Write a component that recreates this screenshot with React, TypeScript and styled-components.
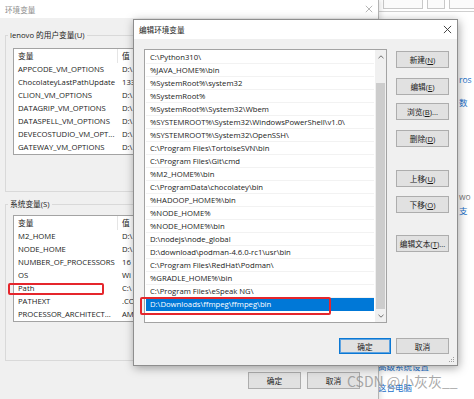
import React from "react";
import styled, { createGlobalStyle } from "styled-components";

const Global = createGlobalStyle`
  html, body { margin: 0; padding: 0; background: #ffffff; }
  #root { width: 474px; height: 399px; }
`;

const UI_FONT = `"Open Sans", "Noto Sans CJK SC", sans-serif`;

const Desktop = styled.div`
  position: relative;
  width: 474px;
  height: 399px;
  overflow: hidden;
  background: #ffffff;
  font-family: ${UI_FONT};
  font-size: 7.7px;
  color: #1a1a1a;
`;

/* ---------- window far behind (top-right strip + link texts) ---------- */
const BackWindow = styled.div`
  position: absolute;
  left: 379px;
  top: -20px;
  width: 100px;
  height: 32px;
  background: #ffffff;
  border-bottom: 1px solid #cfcfcf;
  display: flex;
  align-items: flex-end;
  gap: 4px;
  padding: 0 0 2px 4px;
  box-sizing: border-box;
`;

const BackButton = styled.div<{ $w: number }>`
  width: ${(p) => p.$w}px;
  height: 20px;
  border: 1px solid #c9c9c9;
  border-top: none;
  background: #fbfbfb;
  box-sizing: border-box;
`;

const SideText = styled.span<{ $x: number; $y: number; $gray?: boolean }>`
  position: absolute;
  left: ${(p) => p.$x}px;
  top: ${(p) => p.$y}px;
  font-size: 8.5px;
  line-height: 10px;
  white-space: nowrap;
  color: ${(p) => (p.$gray ? "#7a7a7a" : "#1a6fc9")};
`;

/* ---------- background window: 环境变量 ---------- */
const EnvWindow = styled.div`
  position: absolute;
  left: 0;
  top: 0;
  width: 379px;
  height: 420px;
  box-sizing: border-box;
  background: #f0f0f0;
  border-right: 1px solid #b4b4b4;
  box-shadow: 2px 0 5px rgba(0, 0, 0, 0.12);
  display: flex;
  flex-direction: column;
`;

const TitleBar = styled.div<{ $h: number; $inactive?: boolean }>`
  height: ${(p) => p.$h}px;
  flex: none;
  background: #ffffff;
  display: flex;
  align-items: center;
  justify-content: space-between;
  padding: 0 5px 0 5px;
  box-sizing: border-box;
  font-size: 7.6px;
  color: ${(p) => (p.$inactive ? "#8d8d8d" : "#1a1a1a")};
`;

const CloseIcon = ({ color, size }: { color: string; size: number }) => (
  <svg width={size} height={size} viewBox="0 0 10 10">
    <path d="M1 1 L9 9 M9 1 L1 9" stroke={color} strokeWidth="1" fill="none" />
  </svg>
);

const EnvBody = styled.div`
  display: flex;
  flex-direction: column;
  padding: 12px 8px 0 5px;
`;

const GroupBox = styled.fieldset<{ $top: number; $padTop: number; $padBottom: number }>`
  margin: ${(p) => p.$top}px 0 0 0;
  padding: ${(p) => p.$padTop}px 7px ${(p) => p.$padBottom}px 7px;
  border: 1px solid #d9d9d9;
  min-width: 0;
`;

const Legend = styled.legend`
  margin-left: -5px;
  padding: 0 2px;
  font-size: 7.7px;
  line-height: 10px;
  color: #1a1a1a;
`;

const VarList = styled.div`
  height: 107px;
  box-sizing: border-box;
  background: #ffffff;
  border: 1px solid #a3a3a3;
  display: flex;
  flex-direction: column;
`;

const VarHeader = styled.div`
  height: 14px;
  flex: none;
  display: grid;
  grid-template-columns: 104px 1fr;
  align-items: center;
`;

const HeaderCell = styled.div<{ $divider?: boolean }>`
  padding-left: 4px;
  height: 14px;
  line-height: 14px;
  border-right: ${(p) => (p.$divider ? "1px solid #e5e5e5" : "none")};
`;

const VarRow = styled.div`
  height: 13px;
  display: grid;
  grid-template-columns: 104px 1fr;
  align-items: center;
  line-height: 13px;
`;

const Cell = styled.div`
  padding-left: 4px;
  white-space: nowrap;
  overflow: hidden;
`;

/* row of the group's own buttons, which lies hidden under the dialog */
const GroupButtonsSpace = styled.div`
  margin-top: 8px;
  height: 17px;
`;

const WinButton = styled.button<{ $w: number; $h?: number; $default?: boolean }>`
  width: ${(p) => p.$w}px;
  height: ${(p) => p.$h ?? 17}px;
  box-sizing: border-box;
  padding: 0;
  margin: 0;
  background: #e1e1e1;
  border: 1px solid ${(p) => (p.$default ? "#0b78d4" : "#adadad")};
  box-shadow: ${(p) => (p.$default ? "inset 0 0 0 1px #5fa3e0" : "none")};
  font-family: ${UI_FONT};
  font-size: 7.7px;
  color: #1a1a1a;
  display: flex;
  align-items: center;
  justify-content: center;
  white-space: nowrap;
  u { text-decoration: underline; text-underline-offset: 1px; }
`;

const EnvFooter = styled.div`
  margin-top: 11px;
  display: flex;
  justify-content: flex-end;
  gap: 6px;
  padding-right: 10px;
`;

/* ---------- front dialog: 编辑环境变量 ---------- */
const EditDialog = styled.div`
  position: absolute;
  left: 133px;
  top: 19px;
  width: 325px;
  height: 347px;
  box-sizing: border-box;
  background: #f0f0f0;
  border: 1px solid #8e8e8e;
  box-shadow: 1px 2px 9px rgba(0, 0, 0, 0.35);
  display: flex;
  flex-direction: column;
  z-index: 2;
`;

const DialogBody = styled.div`
  display: grid;
  grid-template-columns: 243px 53px;
  column-gap: 9px;
  padding: 10px 8px 0 10px;
`;

const PathList = styled.div`
  height: 274px;
  box-sizing: border-box;
  background: #ffffff;
  border: 1px solid #a3a3a3;
  display: flex;
`;

const PathRows = styled.div`
  flex: 1;
  padding-top: 1px;
  display: flex;
  flex-direction: column;
  min-width: 0;
`;

const PathRow = styled.div<{ $selected?: boolean }>`
  height: 13px;
  flex: none;
  box-sizing: border-box;
  margin: 0 1px;
  padding-left: 4px;
  line-height: 13px;
  white-space: nowrap;
  overflow: hidden;
  border-bottom: 1px solid ${(p) => (p.$selected ? "#0078d7" : "#f2f2f2")};
  background: ${(p) => (p.$selected ? "#0078d7" : "transparent")};
  color: ${(p) => (p.$selected ? "#ffffff" : "#1a1a1a")};
`;

const ScrollBar = styled.div`
  width: 11px;
  flex: none;
  background: #f0f0f0;
  display: flex;
  flex-direction: column;
`;

const ScrollArrow = styled.div`
  height: 13px;
  flex: none;
  display: flex;
  align-items: center;
  justify-content: center;
`;

const ScrollTrack = styled.div`
  flex: 1;
  padding: 20px 1px 0 1px;
  display: flex;
`;

const ScrollThumb = styled.div`
  flex: 1;
  background: #cdcdcd;
`;

const SideButtons = styled.div`
  display: flex;
  flex-direction: column;
  padding-top: 2px;
`;

const SideSlot = styled.div<{ $space: number }>`
  margin-top: ${(p) => p.$space}px;
`;

const DialogFooter = styled.div`
  margin-top: 15px;
  display: flex;
  justify-content: flex-end;
  gap: 5px;
  padding-right: 8px;
`;

const Grip = styled.svg`
  position: absolute;
  right: 2px;
  bottom: 2px;
`;

/* ---------- annotation overlays ---------- */
const RedMark = styled.div<{ $x: number; $y: number; $w: number; $h: number }>`
  position: absolute;
  left: ${(p) => p.$x}px;
  top: ${(p) => p.$y}px;
  width: ${(p) => p.$w}px;
  height: ${(p) => p.$h}px;
  box-sizing: border-box;
  border: 2px solid #e5262c;
  border-radius: 2px;
  z-index: 5;
`;

const Watermark = styled.div`
  position: absolute;
  left: 347px;
  top: 372px;
  font-family: "Noto Sans CJK SC", sans-serif;
  font-size: 14px;
  line-height: 18px;
  color: rgba(140, 140, 140, 0.75);
  white-space: nowrap;
  z-index: 6;
`;

const Chevron = ({ down }: { down?: boolean }) => (
  <svg width="6" height="4" viewBox="0 0 6 4">
    <path
      d={down ? "M0.5 0.8 L3 3.2 L5.5 0.8" : "M0.5 3.2 L3 0.8 L5.5 3.2"}
      stroke="#606060"
      strokeWidth="0.9"
      fill="none"
    />
  </svg>
);

const userVars: [string, string][] = [
  ["APPCODE_VM_OPTIONS", "D:\\"],
  ["ChocolateyLastPathUpdate", "133"],
  ["CLION_VM_OPTIONS", "D:\\"],
  ["DATAGRIP_VM_OPTIONS", "D:\\"],
  ["DATASPELL_VM_OPTIONS", "D:\\"],
  ["DEVECOSTUDIO_VM_OPT...", "D:\\"],
  ["GATEWAY_VM_OPTIONS", "D:\\"],
];

const sysVars: [string, string][] = [
  ["M2_HOME", "D:\\"],
  ["NODE_HOME", "D:\\"],
  ["NUMBER_OF_PROCESSORS", "16"],
  ["OS", "Wi"],
  ["Path", "C:\\"],
  ["PATHEXT", ".CO"],
  ["PROCESSOR_ARCHITECT...", "AM"],
];

const paths = [
  "C:\\Python310\\",
  "%JAVA_HOME%\\bin",
  "%SystemRoot%\\system32",
  "%SystemRoot%",
  "%SystemRoot%\\System32\\Wbem",
  "%SYSTEMROOT%\\System32\\WindowsPowerShell\\v1.0\\",
  "%SYSTEMROOT%\\System32\\OpenSSH\\",
  "C:\\Program Files\\TortoiseSVN\\bin",
  "C:\\Program Files\\Git\\cmd",
  "%M2_HOME%\\bin",
  "C:\\ProgramData\\chocolatey\\bin",
  "%HADOOP_HOME%\\bin",
  "%NODE_HOME%",
  "%NODE_HOME%\\bin",
  "D:\\nodejs\\node_global",
  "D:\\download\\podman-4.6.0-rc1\\usr\\bin",
  "C:\\Program Files\\RedHat\\Podman\\",
  "%GRADLE_HOME%\\bin",
  "C:\\Program Files\\eSpeak NG\\",
  "D:\\Downloads\\ffmpeg\\ffmpeg\\bin",
];

const sideButtons: { label: string; key: string; tail?: string; space: number }[] = [
  { label: "新建", key: "N", space: 0 },
  { label: "编辑", key: "E", space: 10 },
  { label: "浏览", key: "B", tail: "...", space: 8 },
  { label: "删除", key: "D", space: 10 },
  { label: "上移", key: "U", space: 23 },
  { label: "下移", key: "O", space: 9 },
  { label: "编辑文本", key: "T", tail: "...", space: 22 },
];

const VarTable = ({ rows }: { rows: [string, string][] }) => (
  <VarList>
    <VarHeader>
      <HeaderCell $divider>变量</HeaderCell>
      <HeaderCell>值</HeaderCell>
    </VarHeader>
    {rows.map(([name, value]) => (
      <VarRow key={name}>
        <Cell>{name}</Cell>
        <Cell>{value}</Cell>
      </VarRow>
    ))}
  </VarList>
);

export default function App() {
  return (
    <Desktop>
      <Global />

      <BackWindow>
        <BackButton $w={40} />
        <BackButton $w={18} />
        <BackButton $w={30} />
      </BackWindow>
      <SideText $x={459} $y={75}>ros</SideText>
      <SideText $x={459} $y={98}>数</SideText>
      <SideText $x={459} $y={192} $gray>wo</SideText>
      <SideText $x={459} $y={206}>支</SideText>
      <SideText $x={378} $y={362}>高级系统设置</SideText>
      <SideText $x={378} $y={383}>这台电脑</SideText>

      <EnvWindow>
        <TitleBar $h={18} $inactive>
          <span>环境变量</span>
          <CloseIcon color="#a5a5a5" size={8} />
        </TitleBar>
        <EnvBody>
          <GroupBox $top={0} $padTop={8} $padBottom={11}>
            <Legend>lenovo 的用户变量(U)</Legend>
            <VarTable rows={userVars} />
            <GroupButtonsSpace />
          </GroupBox>
          <GroupBox $top={7} $padTop={6} $padBottom={13}>
            <Legend>系统变量(S)</Legend>
            <VarTable rows={sysVars} />
            <GroupButtonsSpace />
          </GroupBox>
          <EnvFooter>
            <WinButton $w={53}>确定</WinButton>
            <WinButton $w={53}>取消</WinButton>
          </EnvFooter>
        </EnvBody>
      </EnvWindow>

      <EditDialog>
        <TitleBar $h={19}>
          <span>编辑环境变量</span>
          <CloseIcon color="#333333" size={9} />
        </TitleBar>
        <DialogBody>
          <PathList>
            <PathRows>
              {paths.map((p, i) => (
                <PathRow key={p} $selected={i === paths.length - 1}>
                  {p}
                </PathRow>
              ))}
            </PathRows>
            <ScrollBar>
              <ScrollArrow>
                <Chevron />
              </ScrollArrow>
              <ScrollTrack>
                <ScrollThumb />
              </ScrollTrack>
              <ScrollArrow>
                <Chevron down />
              </ScrollArrow>
            </ScrollBar>
          </PathList>
          <SideButtons>
            {sideButtons.map((b) => (
              <SideSlot key={b.label} $space={b.space}>
                <WinButton $w={53}>
                  {b.label}(<u>{b.key}</u>){b.tail ?? ""}
                </WinButton>
              </SideSlot>
            ))}
          </SideButtons>
        </DialogBody>
        <DialogFooter>
          <WinButton $w={52} $h={16} $default>
            确定
          </WinButton>
          <WinButton $w={53} $h={16}>
            取消
          </WinButton>
        </DialogFooter>
        <Grip width="7" height="7" viewBox="0 0 7 7">
          <rect x="5" y="1" width="1" height="1" fill="#a0a0a0" />
          <rect x="3" y="3" width="1" height="1" fill="#a0a0a0" />
          <rect x="5" y="3" width="1" height="1" fill="#a0a0a0" />
          <rect x="1" y="5" width="1" height="1" fill="#a0a0a0" />
          <rect x="3" y="5" width="1" height="1" fill="#a0a0a0" />
          <rect x="5" y="5" width="1" height="1" fill="#a0a0a0" />
        </Grip>
      </EditDialog>

      <RedMark $x={8} $y={283} $w={96} $h={12} />
      <RedMark $x={140} $y={297} $w={191} $h={18} />

      <Watermark>CSDN @小灰灰__</Watermark>
    </Desktop>
  );
}
